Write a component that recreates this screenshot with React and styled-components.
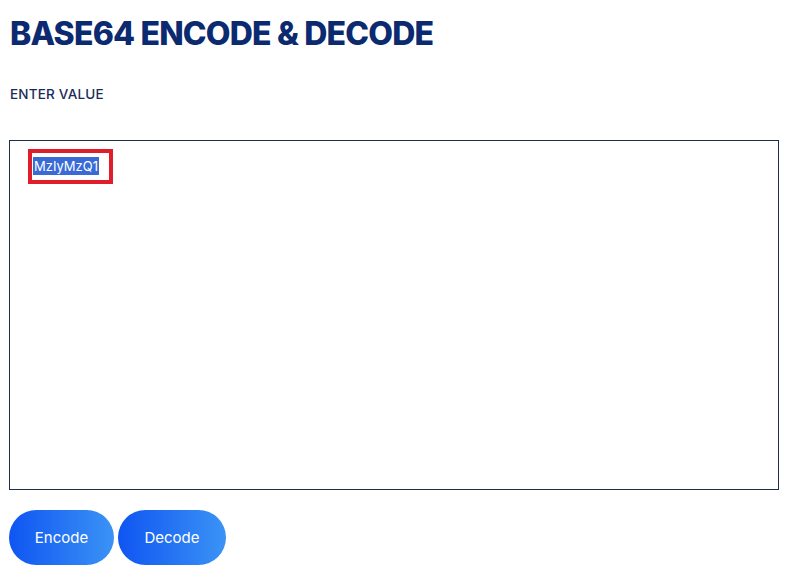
import React from 'react';
import styled, { createGlobalStyle } from 'styled-components';

const GlobalStyle = createGlobalStyle`
	body {
		margin: 0;
		background: #ffffff;
		font-family: 'Inter', 'Liberation Sans', sans-serif;
	}
`;

const Page = styled.div`
	padding: 14px 17px 0 9px;
`;

const Title = styled.h1`
	margin: 0 0 0 1px;
	font-family: 'Inter', sans-serif;
	font-size: 32px;
	font-weight: 800;
	line-height: 40px;
	letter-spacing: -0.8px;
	color: #0b2a6f;
`;

const Label = styled.label`
	display: block;
	margin: 32px 0 0 1px;
	font-size: 13.5px;
	font-weight: 500;
	letter-spacing: 0.2px;
	line-height: 16px;
	color: #1b2b57;
`;

const InputBox = styled.div`
	position: relative;
	box-sizing: border-box;
	height: 350px;
	margin-top: 38px;
	padding: 16px 23px;
	border: 1px solid #1d2d4a;
	font-size: 13px;
	line-height: 19px;
	color: #222;
`;

const Selected = styled.span`
	background: #3a6ad6;
	color: #ffffff;
	padding: 1px 1px;
`;

const Annotation = styled.div`
	position: absolute;
	left: 18px;
	top: 8px;
	width: 85px;
	height: 35px;
	box-sizing: border-box;
	border: 4px solid #e01e2b;
	pointer-events: none;
`;

const ButtonRow = styled.div`
	display: flex;
	gap: 4px;
	margin-top: 20px;
`;

const Button = styled.button`
	width: ${(p) => p.width}px;
	height: 55px;
	border: 0;
	border-radius: 28px;
	background: linear-gradient(90deg, #0f55f2 0%, #3b93f5 100%);
	color: #ffffff;
	font-family: 'Inter', sans-serif;
	font-size: 15px;
	font-weight: 400;
	cursor: pointer;
`;

const App = () => {
	return (
		<>
			<GlobalStyle />
			<Page>
				<Title>BASE64 ENCODE &amp; DECODE</Title>
				<Label>ENTER VALUE</Label>
				<InputBox>
					<Selected>MzIyMzQ1</Selected>
					<Annotation />
				</InputBox>
				<ButtonRow>
					<Button width={105}>Encode</Button>
					<Button width={108}>Decode</Button>
				</ButtonRow>
			</Page>
		</>
	);
};

export default App;
